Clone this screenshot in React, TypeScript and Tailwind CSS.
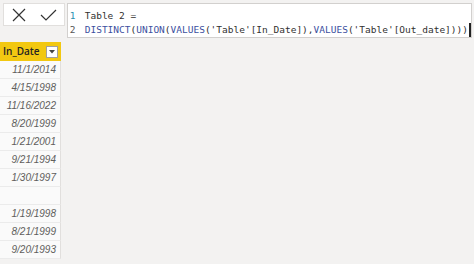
const dates = [
  '11/1/2014',
  '4/15/1998',
  '11/16/2022',
  '8/20/1999',
  '1/21/2001',
  '9/21/1994',
  '1/30/1997',
  '',
  '1/19/1998',
  '8/21/1999',
  '9/20/1993',
];

export default function App() {
  return (
    <div className="w-[474px] h-[264px] overflow-hidden bg-[#f3f2f1] font-['Liberation_Sans',sans-serif]">
      {/* formula bar */}
      <div className="flex items-start gap-[2px] pt-[3px] pl-[3px] pr-[2px]">
        <div className="w-[65px] h-[23px] bg-white border border-[#e1dfdd] flex items-center justify-center gap-[14px] pl-[2px]">
          <svg width="14" height="14" viewBox="0 0 14 14" fill="none" stroke="#333" strokeWidth="1.2">
            <path d="M1 1 L13 13 M13 1 L1 13" />
          </svg>
          <svg width="17" height="12" viewBox="0 0 17 12" fill="none" stroke="#333" strokeWidth="1.2">
            <path d="M1 6 L6 11 L16 1" />
          </svg>
        </div>
        <div className="flex-1 h-[35px] bg-white border border-[#d2d0ce] pl-[2px] pt-[5px] font-['DejaVu_Sans_Mono',monospace] text-[9.5px] leading-[14px] text-[#323130] whitespace-nowrap">
          <div className="flex">
            <span className="w-[15px] text-[#2b91af]">1</span>
            <span>Table 2 =</span>
          </div>
          <div className="flex items-center">
            <span className="w-[15px] text-[#555]">2</span>
            <span>
              <span className="text-[#3c50a0]">DISTINCT</span>(<span className="text-[#3c50a0]">UNION</span>(<span className="text-[#3c50a0]">VALUES</span>('Table'[In_Date]),<span className="text-[#3c50a0]">VALUES</span>('Table'[Out_date])))
            </span>
            <span className="ml-[1px] w-[2px] h-[14px] bg-[#222]" />
          </div>
        </div>
      </div>

      {/* table column */}
      <div className="mt-[4px] w-[61px]">
        <div className="h-[19px] bg-[#f2c811] flex items-center justify-between pl-[3px] pr-[3px]">
          <span className="font-['Open_Sans',sans-serif] text-[10px] font-semibold text-[#252423]">In_Date</span>
          <span className="w-[12px] h-[12px] bg-white border border-[#a19f9d] flex items-center justify-center">
            <svg width="6" height="4" viewBox="0 0 6 4">
              <path d="M0 0 L6 0 L3 3.5 Z" fill="#444" />
            </svg>
          </span>
        </div>
        {dates.map((d, i) => (
          <div
            key={i}
            className="h-[18px] bg-[#fafafa] border-r border-[#e1dfdd] border-b border-b-[#ebebeb] flex items-center justify-end pr-[4px] text-[10px] italic text-[#605e5c]"
          >
            {d}
          </div>
        ))}
      </div>
    </div>
  );
}
